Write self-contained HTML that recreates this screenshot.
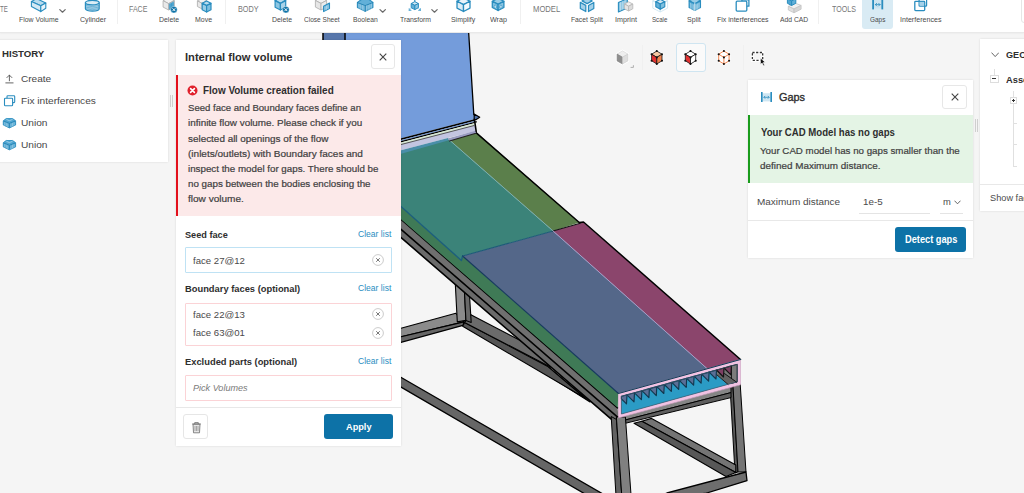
<!DOCTYPE html>
<html><head><meta charset="utf-8">
<style>
*{box-sizing:border-box;margin:0;padding:0}
html,body{width:1024px;height:493px;overflow:hidden;background:#f5f5f5;font-family:"Liberation Sans",sans-serif;color:#333}
.abs{position:absolute}
#scene{position:absolute;left:0;top:0;width:1024px;height:493px}
#toolbar{position:absolute;left:0;top:0;width:1024px;height:32px;background:#fff;box-shadow:0 1px 2px rgba(0,0,0,.08)}
.tl{position:absolute;top:14px;font-size:7.6px;color:#444;white-space:nowrap;transform:translateX(-50%);letter-spacing:-0.15px}
.tg{position:absolute;top:3px;font-size:9.5px;color:#666;white-space:nowrap;letter-spacing:-0.3px}
.sep{position:absolute;top:0;width:1px;height:24px;background:#f0f0f0}
.panel{position:absolute;background:#fff;box-shadow:0 0 2px rgba(0,0,0,.12)}
.t{position:absolute;white-space:nowrap;line-height:1;transform-origin:0 50%}
</style></head><body>
<svg id="scene" viewBox="0 0 1024 493">
<!-- SCENE -->
<polygon points="380.0,365.2 606.4,496.0 588.5,496.0 380.0,374.9" fill="#666" stroke="#000" stroke-width="1.3" stroke-linejoin="round"/>
<polygon points="730.0,386.0 733.0,386.0 738.0,472.0 735.0,473.0" fill="#585858" stroke="#000" stroke-width="1" stroke-linejoin="round"/>
<polygon points="733.0,386.0 740.2,384.0 746.0,472.0 738.0,472.0" fill="#747474" stroke="#000" stroke-width="1" stroke-linejoin="round"/>
<polygon points="651.6,418.4 735.8,465.1 735.8,472.5 641.8,421.3" fill="#747474" stroke="#000" stroke-width="1.1" stroke-linejoin="round"/>
<polygon points="641.8,421.3 735.8,472.5 726.0,476.5 634.0,423.3" fill="#585858" stroke="#000" stroke-width="1.1" stroke-linejoin="round"/>
<polygon points="746.0,472.0 747.0,480.7 705.0,493.5 660.0,496.0 667.0,493.0" fill="#6e6e6e" stroke="#000" stroke-width="1.3" stroke-linejoin="round"/>
<polygon points="620.0,416.6 731.0,386.4 731.0,392.6 625.3,420.0" fill="#858585" stroke="#000" stroke-width="1" stroke-linejoin="round"/>
<polygon points="625.3,420.0 731.0,392.6 731.0,397.6 625.3,423.3" fill="#5e5e5e" stroke="#000" stroke-width="1" stroke-linejoin="round"/>
<polygon points="380.0,334.0 455.8,313.3 463.9,321.9 380.0,341.7" fill="#8b8b8b" stroke="#000" stroke-width="1.1" stroke-linejoin="round"/>
<polygon points="380.0,341.7 463.9,321.9 462.9,325.4 380.0,348.1" fill="#666" stroke="#000" stroke-width="1.1" stroke-linejoin="round"/>
<polygon points="470.4,314.6 545.8,364.6 590.0,402.0 464.6,322.4" fill="#6b6b6b" stroke="#000" stroke-width="1.1" stroke-linejoin="round"/>
<polygon points="464.6,322.4 547.3,366.2 585.0,398.0 462.7,326.3" fill="#555" stroke="#000" stroke-width="1.1" stroke-linejoin="round"/>
<polygon points="470.4,314.6 530.0,345.5 560.0,372.0 464.6,322.4" fill="#6b6b6b" stroke="#000" stroke-width="1.1" stroke-linejoin="round"/>
<polygon points="455.2,282.0 464.4,290.0 465.9,320.4 457.3,321.9" fill="#8b8b8b" stroke="#000" stroke-width="1.1" stroke-linejoin="round"/>
<polygon points="464.4,290.0 469.5,295.0 471.2,322.4 465.9,320.4" fill="#686868" stroke="#000" stroke-width="1.1" stroke-linejoin="round"/>
<polygon points="380.0,201.0 617.6,407.8 618.5,417.8 380.0,211.1" fill="#6f6f6f"/>
<polygon points="380.0,211.1 618.5,417.8 618.5,425.4 380.0,219.4" fill="#6a6a6a"/>
<polyline points="380.0,201.0 617.6,407.8" fill="none" stroke="#000" stroke-width="1.6" stroke-linecap="round" stroke-linejoin="round"/>
<polyline points="380.0,211.1 618.5,417.8" fill="none" stroke="#000" stroke-width="1.6" stroke-linecap="round" stroke-linejoin="round"/>
<polyline points="380.0,219.4 618.5,425.4" fill="none" stroke="#000" stroke-width="1.6" stroke-linecap="round" stroke-linejoin="round"/>
<polygon points="611.2,416.5 616.4,419.4 621.8,496.0 616.0,496.0" fill="#626262" stroke="#000" stroke-width="1" stroke-linejoin="round"/>
<polygon points="616.4,417.0 625.4,417.0 631.1,496.0 621.8,496.0" fill="#808080" stroke="#000" stroke-width="1" stroke-linejoin="round"/>
<polygon points="380.0,187.8 461.4,260.5 462.6,256.0 618.2,393.2 617.8,407.8 380.0,201.0" fill="#3f7a56"/>
<polygon points="448.0,138.8 476.0,132.0 579.3,222.5 553.1,231.0" fill="#5b7f4b"/>
<polygon points="553.1,231.0 583.5,222.5 740.5,359.5 707.3,368.8" fill="#8b456c"/>
<polygon points="462.6,256.0 553.1,231.0 707.3,368.8 618.5,393.5" fill="#546789"/>
<polygon points="380.0,158.0 448.0,138.8 553.1,231.0 462.6,256.0 461.4,260.5 380.0,187.8" fill="#3b8379"/>
<polyline points="380.0,187.8 461.4,260.5 462.6,256.0" fill="none" stroke="#1c5f7c" stroke-width="1.4" stroke-linecap="round" stroke-linejoin="round"/>
<polyline points="462.6,256.0 618.2,393.2" fill="none" stroke="#163a5e" stroke-width="1.2" stroke-linecap="round" stroke-linejoin="round"/>
<polyline points="462.6,256.0 553.1,231.0" fill="none" stroke="#1d5a78" stroke-width="1.1" stroke-linecap="round" stroke-linejoin="round"/>
<polyline points="553.1,231.0 581.0,223.0" fill="none" stroke="#111" stroke-width="1.3" stroke-linecap="round" stroke-linejoin="round"/>
<polyline points="448.0,138.8 553.1,231.0" fill="none" stroke="#7fb0b0" stroke-width="0.9" stroke-linecap="round" stroke-linejoin="round"/>
<polyline points="553.1,231.0 707.3,368.8" fill="none" stroke="#a9a0cc" stroke-width="0.9" stroke-linecap="round" stroke-linejoin="round"/>
<polyline points="476.0,132.6 579.3,222.5" fill="none" stroke="#000" stroke-width="1.5" stroke-linecap="round" stroke-linejoin="round"/>
<polyline points="579.3,222.5 583.5,222.0 740.5,359.5" fill="none" stroke="#000" stroke-width="1.5" stroke-linecap="round" stroke-linejoin="round"/>
<polygon points="323.0,32.0 345.0,32.0 345.0,160.0 323.0,160.0" fill="#5877ab"/>
<polygon points="345.0,32.0 468.5,32.0 474.2,119.3 340.0,154.2" fill="#749cdb"/>
<polyline points="323.0,32.0 323.0,60.0" fill="none" stroke="#000" stroke-width="1.5" stroke-linecap="round" stroke-linejoin="round"/>
<polyline points="345.0,32.0 345.0,60.0" fill="none" stroke="#000" stroke-width="1.5" stroke-linecap="round" stroke-linejoin="round"/>
<polyline points="468.5,30.0 473.8,114.5" fill="none" stroke="#000" stroke-width="1.3" stroke-linecap="round" stroke-linejoin="round"/>
<polygon points="474.2,114.0 479.7,117.3 476.2,119.6 474.2,119.6" fill="#4d6fa5" stroke="#000" stroke-width="1.2" stroke-linejoin="round"/>
<polygon points="380.0,149.0 474.8,125.0 476.0,130.7 380.0,155.8" fill="#c3c5e1"/>
<polygon points="380.0,155.8 448.0,138.0 448.0,140.4 380.0,159.7" fill="#4a8ea9"/>
<polygon points="448.0,138.4 476.0,130.4 476.0,133.2 449.5,140.9" fill="#9a9cc2"/>
<polyline points="449.5,141.0 476.0,133.2" fill="none" stroke="#222" stroke-width="1.1" stroke-linecap="round" stroke-linejoin="round"/>
<polygon points="380.0,143.8 474.2,119.3 474.2,121.0 380.0,145.6" fill="#000"/>
<polygon points="380.0,145.6 474.2,121.0 474.2,122.0 380.0,146.6" fill="#6a92d2"/>
<polygon points="380.0,146.6 474.2,122.0 474.2,123.3 380.0,147.9" fill="#000"/>
<polygon points="380.0,147.9 474.2,123.3 474.2,125.0 380.0,149.6" fill="#d6e8d2"/>
<polygon points="380.0,149.6 474.2,125.0 474.2,126.0 380.0,150.6" fill="#555"/>
<polyline points="474.4,119.3 476.2,131.5" fill="none" stroke="#000" stroke-width="1.6" stroke-linecap="round" stroke-linejoin="round"/>
<polyline points="474.2,122.2 476.4,121.8" fill="none" stroke="#000" stroke-width="1.2" stroke-linecap="round" stroke-linejoin="round"/>
<polygon points="618.5,393.5 740.5,359.5 740.5,384.8 618.5,417.9" fill="#f1c3e3"/>
<polygon points="621.4,396.4 737.2,364.3 737.2,381.8 621.4,414.0" fill="#777"/>
<polygon points="621.4,396.4 712.5,371.1 728.0,384.4 621.4,414.0" fill="#2b9bc5"/>
<polygon points="731.5,365.9 737.2,364.3 737.2,381.8 731.5,383.4" fill="#7c7c7c" stroke="#111" stroke-width="0.9" stroke-linejoin="round"/>
<polygon points="716.5,374.6 724.6,373.6 736.8,382.3 728.0,384.4" fill="#626262"/>
<polyline points="724.6,373.6 736.8,382.3" fill="none" stroke="#111" stroke-width="1.0" stroke-linecap="round" stroke-linejoin="round"/>
<polyline points="712.8,371.4 728.0,384.4" fill="none" stroke="#1b1b1b" stroke-width="0.9" stroke-linecap="round" stroke-linejoin="round"/>
<polygon points="621.4,398.8 626.5,403.8 627.0,394.8 621.4,396.4" fill="#5a6f97" stroke="#12384f" stroke-width="1.15" stroke-linejoin="round"/>
<polygon points="627.0,394.8 634.0,401.8 634.5,392.8" fill="#5a6f97" stroke="#12384f" stroke-width="1.15" stroke-linejoin="round"/>
<polygon points="634.5,392.8 641.4,399.7 641.9,390.7" fill="#5a6f97" stroke="#12384f" stroke-width="1.15" stroke-linejoin="round"/>
<polygon points="641.9,390.7 648.9,397.6 649.4,388.6" fill="#5a6f97" stroke="#12384f" stroke-width="1.15" stroke-linejoin="round"/>
<polygon points="649.4,388.6 656.3,395.6 656.8,386.6" fill="#5a6f97" stroke="#12384f" stroke-width="1.15" stroke-linejoin="round"/>
<polygon points="656.8,386.6 663.8,393.5 664.3,384.5" fill="#5a6f97" stroke="#12384f" stroke-width="1.15" stroke-linejoin="round"/>
<polygon points="664.3,384.5 671.3,391.4 671.8,382.4" fill="#5a6f97" stroke="#12384f" stroke-width="1.15" stroke-linejoin="round"/>
<polygon points="671.8,382.4 678.7,389.4 679.2,380.4" fill="#5a6f97" stroke="#12384f" stroke-width="1.15" stroke-linejoin="round"/>
<polygon points="679.2,380.4 686.2,387.3 686.7,378.3" fill="#5a6f97" stroke="#12384f" stroke-width="1.15" stroke-linejoin="round"/>
<polygon points="686.7,378.3 693.6,385.2 694.1,376.2" fill="#5a6f97" stroke="#12384f" stroke-width="1.15" stroke-linejoin="round"/>
<polygon points="694.1,376.2 701.1,383.2 701.6,374.2" fill="#5a6f97" stroke="#12384f" stroke-width="1.15" stroke-linejoin="round"/>
<polygon points="701.6,374.2 708.6,381.1 709.1,372.1" fill="#5a6f97" stroke="#12384f" stroke-width="1.15" stroke-linejoin="round"/>
<polygon points="709.1,372.1 716.0,379.0 716.5,370.0" fill="#5a6f97" stroke="#12384f" stroke-width="1.15" stroke-linejoin="round"/>
<polygon points="716.5,370.0 723.5,377.0 724.0,368.0" fill="#7d3f63" stroke="#141414" stroke-width="1.15" stroke-linejoin="round"/>
<polygon points="724.0,368.0 730.9,374.9 731.4,365.9" fill="#7d3f63" stroke="#141414" stroke-width="1.15" stroke-linejoin="round"/>
<polyline points="621.4,396.4 737.2,364.3 737.2,381.8 621.4,414.0 621.4,396.4" fill="none" stroke="#3a5a70" stroke-width="0.7" stroke-linecap="round" stroke-linejoin="round"/>
<polyline points="618.5,393.5 740.5,359.5 740.5,384.8 618.5,417.9 618.5,393.5" fill="none" stroke="#caa0c0" stroke-width="0.6" stroke-linecap="round" stroke-linejoin="round"/>
<polyline points="618.5,393.5 740.5,359.5" fill="none" stroke="#0e3b55" stroke-width="1.0" stroke-linecap="round" stroke-linejoin="round"/>
<!-- /SCENE -->
</svg>
<!-- UI -->
<div id="toolbar"></div>
<div class="abs" style="left:0;top:32px;width:1024px;height:1px;background:#e9e9e9"></div>
<!-- toolbar separators -->
<div class="sep" style="left:116.5px"></div><div class="sep" style="left:225.3px"></div><div class="sep" style="left:520px"></div><div class="sep" style="left:818.2px"></div>
<!-- active gaps tool bg -->
<div class="abs" style="left:862.3px;top:-3px;width:30.6px;height:31.8px;background:#d9ebf4;border-radius:3px"></div>
<!-- right toolbar box edge -->
<div class="abs" style="left:1020.5px;top:-4px;width:20px;height:27px;border:1px solid #e6e6e6;border-radius:3px"></div>

<!-- HISTORY panel -->
<div class="panel" style="left:-2px;top:39.5px;width:170px;height:122px"></div>
<div class="abs" style="left:170.3px;top:94.5px;width:1px;height:12px;background:#cfcfcf"></div>
<div class="abs" style="left:172.2px;top:94.5px;width:1px;height:12px;background:#cfcfcf"></div>

<!-- FLOW panel -->
<div class="panel" style="left:175.5px;top:39.5px;width:225.5px;height:406px"></div>
<div class="abs" style="left:370.5px;top:44.4px;width:24.2px;height:24.8px;border:1px solid #e7e7e7;border-radius:3px;background:#fff"></div>
<svg class="abs" style="left:378.8px;top:53px" width="8" height="8" viewBox="0 0 8 8"><path d="M0.7 0.7L7.3 7.3M7.3 0.7L0.7 7.3" stroke="#444" stroke-width="1.1" fill="none"/></svg>
<div class="abs" style="left:175.5px;top:74.6px;width:225.5px;height:141.2px;background:#fce9e9"></div>
<div class="abs" style="left:175.5px;top:74.6px;width:2.5px;height:141.2px;background:#e3101c"></div>
<svg class="abs" style="left:187.2px;top:85.4px" width="11" height="11" viewBox="0 0 11 11"><circle cx="5.5" cy="5.5" r="5" fill="#e0202b"/><path d="M3.6 3.6L7.4 7.4M7.4 3.6L3.6 7.4" stroke="#fff" stroke-width="1.6" stroke-linecap="round"/></svg>
<!-- seed input -->
<div class="abs" style="left:185px;top:247.3px;width:206.6px;height:26.2px;border:1px solid #bfe2f4;border-radius:1px;background:#fff"></div>
<svg class="abs" style="left:372.4px;top:254.2px" width="12" height="12" viewBox="0 0 12 12"><circle cx="6" cy="6" r="5.4" fill="#fff" stroke="#c6c6c6" stroke-width="0.9"/><path d="M4.2 4.2L7.8 7.8M7.8 4.2L4.2 7.8" stroke="#555" stroke-width="0.8"/></svg>
<!-- boundary box -->
<div class="abs" style="left:185px;top:302.5px;width:206.6px;height:43.5px;border:1px solid #fbd3d6;border-radius:1px;background:#fff"></div>
<svg class="abs" style="left:372.4px;top:308.4px" width="12" height="12" viewBox="0 0 12 12"><circle cx="6" cy="6" r="5.4" fill="#fff" stroke="#c6c6c6" stroke-width="0.9"/><path d="M4.2 4.2L7.8 7.8M7.8 4.2L4.2 7.8" stroke="#555" stroke-width="0.8"/></svg>
<svg class="abs" style="left:372.4px;top:327.2px" width="12" height="12" viewBox="0 0 12 12"><circle cx="6" cy="6" r="5.4" fill="#fff" stroke="#c6c6c6" stroke-width="0.9"/><path d="M4.2 4.2L7.8 7.8M7.8 4.2L4.2 7.8" stroke="#555" stroke-width="0.8"/></svg>
<!-- excluded box -->
<div class="abs" style="left:185px;top:375.4px;width:206.6px;height:25.2px;border:1px solid #fbd3d6;border-radius:1px;background:#fff"></div>
<div class="abs" style="left:175.5px;top:407px;width:225.5px;height:1px;background:#e8e8e8"></div>
<!-- trash btn -->
<div class="abs" style="left:183.3px;top:414.1px;width:24.4px;height:25px;border:1px solid #e6e6e6;border-radius:3px;background:#fff"></div>
<svg class="abs" style="left:190.5px;top:420.5px" width="11" height="13" viewBox="0 0 11 13"><path d="M1 3h9M3.7 3V1.6h3.6V3M2 3.2l0.5 8.6h6l0.5-8.6z" fill="#e6e6e6" stroke="#727272" stroke-width="0.85" stroke-linejoin="round"/><path d="M4 5v5M5.5 5v5M7 5v5" stroke="#8a8a8a" stroke-width="0.7"/></svg>
<!-- apply btn -->
<div class="abs" style="left:324.4px;top:414.1px;width:68.6px;height:24.9px;border-radius:3px;background:#0d72a7"></div>

<!-- GAPS panel -->
<div class="panel" style="left:747.8px;top:80px;width:225.3px;height:178.2px"></div>
<div class="abs" style="left:942.4px;top:84.5px;width:24.2px;height:24.8px;border:1px solid #e7e7e7;border-radius:3px;background:#fff"></div>
<svg class="abs" style="left:950.7px;top:92.7px" width="8" height="8" viewBox="0 0 8 8"><path d="M0.7 0.7L7.3 7.3M7.3 0.7L0.7 7.3" stroke="#444" stroke-width="1.1" fill="none"/></svg>
<svg class="abs" style="left:761px;top:91.6px" width="11" height="10.6" viewBox="0 0 11 10.6"><rect x="0.8" y="1.2" width="9.4" height="8.2" fill="#cfe6f2"/><rect x="0" y="0" width="1.6" height="10.6" fill="#2a8dbf"/><rect x="9.4" y="0" width="1.6" height="10.6" fill="#2a8dbf"/><path d="M2.8 5.3H8.2M4.2 3.9L2.8 5.3L4.2 6.7M6.8 3.9L8.2 5.3L6.8 6.7" stroke="#2a8dbf" stroke-width="0.8" fill="none"/></svg>
<div class="abs" style="left:747.8px;top:115px;width:225.3px;height:67.7px;background:#e4f4e5"></div>
<div class="abs" style="left:747.8px;top:115px;width:2.5px;height:67.7px;background:#1a9c1c"></div>
<div class="abs" style="left:859.1px;top:213.3px;width:70.7px;height:1px;background:#e4e4e4"></div>
<div class="abs" style="left:939.8px;top:213.3px;width:23.2px;height:1px;background:#e4e4e4"></div>
<svg class="abs" style="left:953.6px;top:199.8px" width="7" height="5" viewBox="0 0 7 5"><path d="M0.5 0.7L3.5 3.8L6.5 0.7" stroke="#555" stroke-width="0.9" fill="none"/></svg>
<div class="abs" style="left:747.8px;top:219.6px;width:225.3px;height:1px;background:#e8e8e8"></div>
<div class="abs" style="left:894.6px;top:227.4px;width:71.8px;height:24.6px;border-radius:3px;background:#0d72a7"></div>
<div class="abs" style="left:975.3px;top:119.4px;width:1px;height:12.6px;background:#cfcfcf"></div>
<div class="abs" style="left:977.2px;top:119.4px;width:1px;height:12.6px;background:#cfcfcf"></div>

<!-- GEOMETRY panel -->
<div class="panel" style="left:979.5px;top:39.3px;width:50px;height:172.2px"></div>
<svg class="abs" style="left:990.5px;top:51.8px" width="8.4" height="5.4" viewBox="0 0 8.4 5.4"><path d="M0.5 0.6L4.2 4.6L7.9 0.6" stroke="#555" stroke-width="0.9" fill="none"/></svg>
<div class="abs" style="left:994.2px;top:69px;width:1px;height:6px;background:#e0e0e0"></div>
<div class="abs" style="left:990px;top:74.5px;width:8.6px;height:8.6px;border:1px solid #ddd;background:#fff"></div>
<div class="abs" style="left:992.3px;top:78.2px;width:4px;height:1.3px;background:#333"></div>
<div class="abs" style="left:1013.1px;top:91px;width:1px;height:75.4px;background:#e0e0e0"></div>
<div class="abs" style="left:1009.5px;top:96.9px;width:7.6px;height:7.6px;border:1px solid #ddd;background:#fff"></div>
<div class="abs" style="left:1011.5px;top:100.2px;width:3.6px;height:1.1px;background:#333"></div>
<div class="abs" style="left:1012.8px;top:98.9px;width:1.1px;height:3.6px;background:#333"></div>
<div class="abs" style="left:1013.1px;top:123px;width:4px;height:1px;background:#e0e0e0"></div>
<div class="abs" style="left:1013.1px;top:144.4px;width:4px;height:1px;background:#e0e0e0"></div>
<div class="abs" style="left:1013.1px;top:165.6px;width:4px;height:1px;background:#e0e0e0"></div>
<div class="abs" style="left:979.5px;top:183.8px;width:50px;height:1px;background:#e8e8e8"></div>

<!-- viewport tool icons -->
<div class="abs" style="left:675.6px;top:42.5px;width:30px;height:29.5px;border:1px solid #cfe5f1;border-radius:3px;background:#fafafa"></div>
<div class="abs" style="left:641.5px;top:45px;width:1px;height:25px;background:#f0f0f0"></div>
<div class="abs" style="left:743.2px;top:45px;width:1px;height:25px;background:#f0f0f0"></div>
<!-- ICONS -->
<svg class="abs" style="left:0;top:0" width="1024" height="32" viewBox="0 0 1024 32"><polygon points="31.40,1.60 36.60,-1.40 45.80,3.00 40.80,5.80" fill="#b9dcee" stroke="#2a8dbf" stroke-width="1.1" stroke-linejoin="round"/>
<polygon points="31.40,1.60 40.80,5.80 40.80,11.60 31.40,6.60" fill="#d4e9f4" stroke="#2a8dbf" stroke-width="1.1" stroke-linejoin="round"/>
<polygon points="40.80,5.80 45.80,3.00 45.80,8.20 40.80,11.60" fill="#eaf4fa" stroke="#2a8dbf" stroke-width="1.1" stroke-linejoin="round"/>
<path d="M59.8 9.6L62.5 12.2L65.2 9.6" fill="none" stroke="#6a6a6a" stroke-width="1.2" stroke-linecap="round" stroke-linejoin="round" />
<path d="M85.4 2.6V8.8A6.9 2.4 0 0 0 99.2 8.8V2.6" fill="#a9d3e9" stroke="#2a8dbf" stroke-width="1.2"/>
<ellipse cx="92.3" cy="2.6" rx="6.9" ry="2.3" fill="#dbedf6" stroke="#2a8dbf" stroke-width="1.2"/>
<path d="M86 5.6Q92.3 7.8 98.6 5.6" fill="none" stroke="#2a8dbf" stroke-width="0.45" stroke-linecap="round" stroke-linejoin="round" />
<path d="M86 7.2Q92.3 9.4 98.6 7.2" fill="none" stroke="#2a8dbf" stroke-width="0.45" stroke-linecap="round" stroke-linejoin="round" />
<path d="M86 8.8Q92.3 11.0 98.6 8.8" fill="none" stroke="#2a8dbf" stroke-width="0.45" stroke-linecap="round" stroke-linejoin="round" />
<polygon points="168.70,-2.22 174.30,0.69 168.70,3.60 163.10,0.69" fill="#f2f2f2" stroke="#b2b2b2" stroke-width="0.9" stroke-linejoin="round"/>
<polygon points="163.10,0.69 168.70,3.60 168.70,10.00 163.10,7.09" fill="#e9e9e9" stroke="#b2b2b2" stroke-width="0.9" stroke-linejoin="round"/>
<polygon points="168.70,3.60 174.30,0.69 174.30,7.09 168.70,10.00" fill="#5fb0d8" stroke="#b2b2b2" stroke-width="0.9" stroke-linejoin="round"/>
<path d="M170 4.4V9.6M171.5 3.6V8.9M173 2.9V8.2" fill="none" stroke="#2a8dbf" stroke-width="0.6" stroke-linecap="round" stroke-linejoin="round" />
<circle cx="173.9" cy="9.7" r="3.3" fill="#0d72a7" stroke="#fff" stroke-width="0.4"/>
<path d="M172.75 8.55L175.05 10.85M175.05 8.55L172.75 10.85" fill="none" stroke="#fff" stroke-width="0.95" stroke-linecap="round" stroke-linejoin="round" />
<polygon points="202.20,-1.59 207.00,0.90 202.20,3.40 197.40,0.90" fill="#f2f2f2" stroke="#b2b2b2" stroke-width="0.9" stroke-linejoin="round"/>
<polygon points="197.40,0.90 202.20,3.40 202.20,9.00 197.40,6.50" fill="#e8e8e8" stroke="#b2b2b2" stroke-width="0.9" stroke-linejoin="round"/>
<polygon points="202.20,3.40 207.00,0.90 207.00,6.50 202.20,9.00" fill="#ececec" stroke="#b2b2b2" stroke-width="0.9" stroke-linejoin="round"/>
<polygon points="206.60,1.02 211.00,3.31 206.60,5.60 202.20,3.31" fill="#b9dcee" stroke="#2a8dbf" stroke-width="1.2" stroke-linejoin="round"/>
<polygon points="202.20,3.31 206.60,5.60 206.60,12.00 202.20,9.71" fill="#9acde6" stroke="#2a8dbf" stroke-width="1.2" stroke-linejoin="round"/>
<polygon points="206.60,5.60 211.00,3.31 211.00,9.71 206.60,12.00" fill="#7fc0e0" stroke="#2a8dbf" stroke-width="1.2" stroke-linejoin="round"/>
<polygon points="280.40,-2.11 285.70,0.64 280.40,3.40 275.10,0.64" fill="#b9dcee" stroke="#2a8dbf" stroke-width="1.2" stroke-linejoin="round"/>
<polygon points="275.10,0.64 280.40,3.40 280.40,10.00 275.10,7.24" fill="#8cc6e3" stroke="#2a8dbf" stroke-width="1.2" stroke-linejoin="round"/>
<polygon points="280.40,3.40 285.70,0.64 285.70,7.24 280.40,10.00" fill="#a9d3e9" stroke="#2a8dbf" stroke-width="1.2" stroke-linejoin="round"/>
<circle cx="285.9" cy="9.7" r="3.3" fill="#0d72a7" stroke="#fff" stroke-width="0.4"/>
<path d="M284.75 8.55L287.05 10.85M287.05 8.55L284.75 10.85" fill="none" stroke="#fff" stroke-width="0.95" stroke-linecap="round" stroke-linejoin="round" />
<polygon points="321.00,-2.42 326.60,0.49 321.00,3.40 315.40,0.49" fill="#f2f2f2" stroke="#b2b2b2" stroke-width="0.9" stroke-linejoin="round"/>
<polygon points="315.40,0.49 321.00,3.40 321.00,10.00 315.40,7.09" fill="#e6e6e6" stroke="#b2b2b2" stroke-width="0.9" stroke-linejoin="round"/>
<polygon points="321.00,3.40 326.60,0.49 326.60,7.09 321.00,10.00" fill="#ececec" stroke="#b2b2b2" stroke-width="0.9" stroke-linejoin="round"/>
<polygon points="323.60,6.30 329.50,3.10 329.50,8.40 323.60,11.60" fill="#6db5da" stroke="#2a8dbf" stroke-width="1.1" stroke-linejoin="round"/>
<path d="M325 6.8V10.2M326.5 6V9.4M328 5.2V8.6" fill="none" stroke="#e6f3fa" stroke-width="0.5" stroke-linecap="round" stroke-linejoin="round" />
<polygon points="357.40,2.40 361.50,-0.50 369.00,-0.50 372.90,2.40 372.90,7.60 365.20,11.30 357.40,7.60" fill="#62b0d8" stroke="#2a8dbf" stroke-width="1.1" stroke-linejoin="round"/>
<path d="M357.4 2.6L365.2 5.6L372.9 2.6M365.2 5.6V11.2" fill="none" stroke="#1f7fb0" stroke-width="0.9" stroke-linecap="round" stroke-linejoin="round" />
<path d="M359 4V8.6M360.7 4.7V9.4M362.4 5.3V10.1M363.9 5.8V10.6M366.6 5.8V10.6M368.2 5.3V10.1M369.8 4.7V9.4M371.4 4V8.6" fill="none" stroke="#cfe6f2" stroke-width="0.45" stroke-linecap="round" stroke-linejoin="round" />
<path d="M380.0 9.6L382.7 12.2L385.4 9.6" fill="none" stroke="#6a6a6a" stroke-width="1.2" stroke-linecap="round" stroke-linejoin="round" />
<polygon points="414.80,1.66 418.40,3.53 414.80,5.40 411.20,3.53" fill="#cfe6f2" stroke="#2a8dbf" stroke-width="1.0" stroke-linejoin="round"/>
<polygon points="411.20,3.53 414.80,5.40 414.80,9.60 411.20,7.73" fill="#62b0d8" stroke="#2a8dbf" stroke-width="1.0" stroke-linejoin="round"/>
<polygon points="414.80,5.40 418.40,3.53 418.40,7.73 414.80,9.60" fill="#8cc6e3" stroke="#2a8dbf" stroke-width="1.0" stroke-linejoin="round"/>
<path d="M414.8 -1V1.2" fill="none" stroke="#2a8dbf" stroke-width="1.2" stroke-linecap="round" stroke-linejoin="round" />
<path d="M410.6 8.8L409.2 10.4M409.2 8.6V10.4H411" fill="none" stroke="#3c9bcb" stroke-width="0.8" stroke-linecap="round" stroke-linejoin="round" />
<path d="M419 8.8L420.4 10.4M420.4 8.6V10.4H418.6" fill="none" stroke="#3c9bcb" stroke-width="0.8" stroke-linecap="round" stroke-linejoin="round" />
<path d="M431.8 9.6L434.5 12.2L437.2 9.6" fill="none" stroke="#6a6a6a" stroke-width="1.2" stroke-linecap="round" stroke-linejoin="round" />
<polygon points="463.50,-2.16 470.00,1.22 463.50,4.60 457.00,1.22" fill="#eaf4fa" stroke="#2a8dbf" stroke-width="1.3" stroke-linejoin="round"/>
<polygon points="457.00,1.22 463.50,4.60 463.50,11.50 457.00,8.12" fill="#dcedf6" stroke="#2a8dbf" stroke-width="1.3" stroke-linejoin="round"/>
<polygon points="463.50,4.60 470.00,1.22 470.00,8.12 463.50,11.50" fill="#f3f9fc" stroke="#2a8dbf" stroke-width="1.3" stroke-linejoin="round"/>
<polygon points="498.10,-1.73 503.90,1.28 498.10,4.30 492.30,1.28" fill="#9acde6" stroke="#2a8dbf" stroke-width="1.3" stroke-linejoin="round"/>
<polygon points="492.30,1.28 498.10,4.30 498.10,10.50 492.30,7.48" fill="#7fc0e0" stroke="#2a8dbf" stroke-width="1.3" stroke-linejoin="round"/>
<polygon points="498.10,4.30 503.90,1.28 503.90,7.48 498.10,10.50" fill="#8cc6e3" stroke="#2a8dbf" stroke-width="1.3" stroke-linejoin="round"/>
<ellipse cx="495.3" cy="6.8" rx="1.3" ry="1.7" fill="#b9dcee" stroke="#2a8dbf" stroke-width="0.6"/>
<ellipse cx="500.9" cy="6.8" rx="1.3" ry="1.7" fill="#b9dcee" stroke="#2a8dbf" stroke-width="0.6"/>
<polygon points="580.30,2.40 585.80,5.40 585.80,11.60 580.30,8.40" fill="#a5d1e9" stroke="#2a8dbf" stroke-width="1.2" stroke-linejoin="round"/>
<polygon points="588.50,5.40 593.80,2.40 593.80,8.40 588.50,11.60" fill="#a5d1e9" stroke="#2a8dbf" stroke-width="1.2" stroke-linejoin="round"/>
<polygon points="582.00,0.90 587.10,-2.00 592.20,0.90 587.10,3.60" fill="#a5d1e9" stroke="#2a8dbf" stroke-width="1.2" stroke-linejoin="round"/>
<polygon points="618.40,2.60 627.30,-1.40 627.30,8.00 618.40,12.00" fill="#8cc6e3" stroke="#2a8dbf" stroke-width="1.1" stroke-linejoin="round"/>
<path d="M620.6 2.6V10.2M622.8 1.6V9.2M625 0.6V8.2" fill="none" stroke="#d7ebf5" stroke-width="0.6" stroke-linecap="round" stroke-linejoin="round" />
<polygon points="628.60,1.83 632.80,4.02 628.60,6.20 624.40,4.02" fill="#efefef" stroke="#b5b5b5" stroke-width="0.8" stroke-linejoin="round"/>
<polygon points="624.40,4.02 628.60,6.20 628.60,11.00 624.40,8.82" fill="#e4e4e4" stroke="#b5b5b5" stroke-width="0.8" stroke-linejoin="round"/>
<polygon points="628.60,6.20 632.80,4.02 632.80,8.82 628.60,11.00" fill="#dcdcdc" stroke="#b5b5b5" stroke-width="0.8" stroke-linejoin="round"/>
<polygon points="660.20,-3.10 667.60,0.75 660.20,4.60 652.80,0.75" fill="none" stroke="#cfe6f2" stroke-width="0.9" stroke-linejoin="round"/>
<polygon points="652.80,0.75 660.20,4.60 660.20,12.00 652.80,8.15" fill="none" stroke="#cfe6f2" stroke-width="0.9" stroke-linejoin="round"/>
<polygon points="660.20,4.60 667.60,0.75 667.60,8.15 660.20,12.00" fill="none" stroke="#cfe6f2" stroke-width="0.9" stroke-linejoin="round"/>
<polygon points="660.30,-0.68 664.80,1.66 660.30,4.00 655.80,1.66" fill="#cfe6f2" stroke="#2a8dbf" stroke-width="1.1" stroke-linejoin="round"/>
<polygon points="655.80,1.66 660.30,4.00 660.30,9.20 655.80,6.86" fill="#62b0d8" stroke="#2a8dbf" stroke-width="1.1" stroke-linejoin="round"/>
<polygon points="660.30,4.00 664.80,1.66 664.80,6.86 660.30,9.20" fill="#7fc0e0" stroke="#2a8dbf" stroke-width="1.1" stroke-linejoin="round"/>
<polygon points="694.80,-2.13 700.50,0.84 694.80,3.80 689.10,0.84" fill="#9acde6" stroke="#2a8dbf" stroke-width="1.1" stroke-linejoin="round"/>
<polygon points="689.10,0.84 694.80,3.80 694.80,10.40 689.10,7.44" fill="#4fa6d2" stroke="#2a8dbf" stroke-width="1.1" stroke-linejoin="round"/>
<polygon points="694.80,3.80 700.50,0.84 700.50,7.44 694.80,10.40" fill="#62b0d8" stroke="#2a8dbf" stroke-width="1.1" stroke-linejoin="round"/>
<path d="M690.6 3.4V8.6M692 4.1V9.4M693.4 4.8V10M696.2 4.8V10M697.6 4.1V9.4M699 3.4V8.6" fill="none" stroke="#d7ebf5" stroke-width="0.5" stroke-linecap="round" stroke-linejoin="round" />
<path d="M694.8 3.6L694.8 10.4" fill="none" stroke="#eef7fb" stroke-width="1.0" stroke-linecap="round" stroke-linejoin="round" />
<path d="M741.9 -1V1.2M741.9 -0.2H748.9V6.2H746.8" fill="none" stroke="#2a8dbf" stroke-width="1.3" stroke-linecap="round" stroke-linejoin="round" />
<rect x="736.2" y="1.2" width="10.6" height="9.9" rx="1" fill="#fff" stroke="#2a8dbf" stroke-width="1.3"/>
<polygon points="788.30,6.40 795.20,3.20 801.10,5.40 794.00,9.00" fill="#f0f0f0" stroke="#c4c4c4" stroke-width="0.8" stroke-linejoin="round"/>
<polygon points="788.30,6.40 794.00,9.00 794.00,12.80 788.30,10.00" fill="#e0e0e0" stroke="#c4c4c4" stroke-width="0.8" stroke-linejoin="round"/>
<polygon points="794.00,9.00 801.10,5.40 801.10,9.20 794.00,12.80" fill="#d6d6d6" stroke="#c4c4c4" stroke-width="0.8" stroke-linejoin="round"/>
<polygon points="791.60,-3.47 795.80,-1.28 791.60,0.90 787.40,-1.28" fill="#9acde6" stroke="#2a8dbf" stroke-width="1.0" stroke-linejoin="round"/>
<polygon points="787.40,-1.28 791.60,0.90 791.60,5.50 787.40,3.32" fill="#4fa6d2" stroke="#2a8dbf" stroke-width="1.0" stroke-linejoin="round"/>
<polygon points="791.60,0.90 795.80,-1.28 795.80,3.32 791.60,5.50" fill="#62b0d8" stroke="#2a8dbf" stroke-width="1.0" stroke-linejoin="round"/>
<rect x="873" y="-1" width="9.5" height="9.6" fill="#cde4f0"/>
<rect x="872.2" y="-1" width="1.8" height="10.4" fill="#2a8dbf"/><rect x="881.4" y="-1" width="1.8" height="10.4" fill="#2a8dbf"/>
<path d="M875.4 4.6H880M876.7 3.3L875.4 4.6L876.7 5.9M878.7 3.3L880 4.6L878.7 5.9" fill="none" stroke="#2a8dbf" stroke-width="0.8" stroke-linecap="round" stroke-linejoin="round" />
<rect x="919.1" y="-2" width="7.5" height="8.2" rx="0.8" fill="#fff" stroke="#2a8dbf" stroke-width="1.2"/>
<rect x="914.8" y="1.3" width="9.9" height="9.3" rx="0.8" fill="none" stroke="#2a8dbf" stroke-width="1.3"/>
<rect x="919.7" y="1.9" width="4.4" height="3.7" fill="#a5d1e9"/></svg>
<svg class="abs" style="left:0;top:0" width="40" height="170" viewBox="0 0 40 170"><path d="M9.4 75.2V80.8M6.9 77.6L9.4 75.1L11.9 77.6M5.8 82.9H13.1" fill="none" stroke="#555" stroke-width="0.9" stroke-linecap="round" stroke-linejoin="round"/>
<rect x="7" y="95.8" width="7.7" height="6.8" rx="0.8" fill="#fff" stroke="#2a8dbf" stroke-width="1.1"/>
<rect x="4.5" y="98.3" width="8.1" height="7.4" rx="0.8" fill="#fff" stroke="#2a8dbf" stroke-width="1.1"/>
<path d="M3.3 120.8L6.2 118.6L12.6 118.6L15.6 120.8V125.0L9.4 127.9L3.3 125.0Z" fill="#4fa6d2" stroke="#2a8dbf" stroke-width="0.9" stroke-linejoin="round"/>
<path d="M3.5 121.0L9.4 123.4L15.4 121.0M9.4 123.4V127.7" fill="none" stroke="#1f7fb0" stroke-width="0.8"/>
<path d="M4.8 122.2V125.8M6.3 122.8V126.5M7.8 123.4V127.1M11 123.4V127.1M12.5 122.8V126.5M14 122.2V125.8" fill="none" stroke="#cfe6f2" stroke-width="0.45"/>
<path d="M6.4 119.4L9.4 120.7L12.5 119.4" fill="none" stroke="#cfe6f2" stroke-width="0.6"/>
<path d="M3.3 142.70000000000002L6.2 140.5L12.6 140.5L15.6 142.70000000000002V146.9L9.4 149.8L3.3 146.9Z" fill="#4fa6d2" stroke="#2a8dbf" stroke-width="0.9" stroke-linejoin="round"/>
<path d="M3.5 142.9L9.4 145.3L15.4 142.9M9.4 145.3V149.6" fill="none" stroke="#1f7fb0" stroke-width="0.8"/>
<path d="M4.8 144.1V147.70000000000002M6.3 144.70000000000002V148.4M7.8 145.3V149.0M11 145.3V149.0M12.5 144.70000000000002V148.4M14 144.1V147.70000000000002" fill="none" stroke="#cfe6f2" stroke-width="0.45"/>
<path d="M6.4 141.3L9.4 142.6L12.5 141.3" fill="none" stroke="#cfe6f2" stroke-width="0.6"/></svg>
<svg class="abs" style="left:0;top:0" width="1024" height="80" viewBox="0 0 1024 80"><polygon points="622.50,50.80 627.90,54.10 627.90,60.90 622.50,64.00 617.10,60.90 617.10,54.10" fill="#fff" stroke="#fff" stroke-width="2.4" stroke-linejoin="round"/>
<polygon points="622.50,50.80 627.90,54.10 622.50,57.20 617.10,54.10" fill="#efefef" stroke="#cfcfcf" stroke-width="0.5" stroke-linejoin="round"/>
<polygon points="617.10,54.10 622.50,57.20 622.50,64.00 617.10,60.90" fill="#8e8e8e" stroke="#808080" stroke-width="0.6" stroke-linejoin="round"/>
<polygon points="622.50,57.20 627.90,54.10 627.90,60.90 622.50,64.00" fill="#dedede" stroke="#c4c4c4" stroke-width="0.5" stroke-linejoin="round"/>
<path d="M633.4 65.2V67.4H630.6" fill="none" stroke="#a6a6a6" stroke-width="0.9"/>
<polygon points="656.80,51.00 662.00,54.20 662.00,60.80 656.80,64.00 651.60,60.80 651.60,54.20" fill="#fff" stroke="#fff" stroke-width="2.6" stroke-linejoin="round"/>
<polygon points="656.80,51.00 662.00,54.20 656.80,57.40 651.60,54.20" fill="#f6c8a2" stroke="#111" stroke-width="0.8" stroke-linejoin="round"/>
<polygon points="651.60,54.20 656.80,57.40 656.80,64.00 651.60,60.80" fill="#e23232" stroke="#111" stroke-width="0.8" stroke-linejoin="round"/>
<polygon points="656.80,57.40 662.00,54.20 662.00,60.80 656.80,64.00" fill="#f0824e" stroke="#111" stroke-width="0.8" stroke-linejoin="round"/>
<circle cx="656.80" cy="51.00" r="1.05" fill="#111"/>
<circle cx="651.60" cy="54.20" r="1.05" fill="#111"/>
<circle cx="662.00" cy="54.20" r="1.05" fill="#111"/>
<circle cx="656.80" cy="57.40" r="1.05" fill="#111"/>
<circle cx="651.60" cy="60.80" r="1.05" fill="#111"/>
<circle cx="662.00" cy="60.80" r="1.05" fill="#111"/>
<circle cx="656.80" cy="64.00" r="1.05" fill="#111"/>
<polygon points="690.50,51.00 695.70,54.20 695.70,60.80 690.50,64.00 685.30,60.80 685.30,54.20" fill="#fff" stroke="#fff" stroke-width="2.6" stroke-linejoin="round"/>
<polygon points="690.50,51.00 695.70,54.20 690.50,57.40 685.30,54.20" fill="#ffffff" stroke="#111" stroke-width="0.8" stroke-linejoin="round"/>
<polygon points="685.30,54.20 690.50,57.40 690.50,64.00 685.30,60.80" fill="#e23232" stroke="#111" stroke-width="0.8" stroke-linejoin="round"/>
<polygon points="690.50,57.40 695.70,54.20 695.70,60.80 690.50,64.00" fill="#ffffff" stroke="#111" stroke-width="0.8" stroke-linejoin="round"/>
<circle cx="690.50" cy="51.00" r="1.05" fill="#111"/>
<circle cx="685.30" cy="54.20" r="1.05" fill="#111"/>
<circle cx="695.70" cy="54.20" r="1.05" fill="#111"/>
<circle cx="690.50" cy="57.40" r="1.05" fill="#111"/>
<circle cx="685.30" cy="60.80" r="1.05" fill="#111"/>
<circle cx="695.70" cy="60.80" r="1.05" fill="#111"/>
<circle cx="690.50" cy="64.00" r="1.05" fill="#111"/>
<polygon points="723.90,51.00 729.10,54.20 729.10,60.80 723.90,64.00 718.70,60.80 718.70,54.20" fill="#fff" stroke="#fff" stroke-width="2.6" stroke-linejoin="round"/>
<path d="M723.9 51.0L729.1 54.2L729.1 60.8L723.9 64.0L718.6999999999999 60.8L718.6999999999999 54.2ZM718.6999999999999 54.2L723.9 57.4L729.1 54.2M723.9 57.4L723.9 64.0" fill="none" stroke="#f0783c" stroke-width="0.9"/>
<circle cx="723.90" cy="51.00" r="1.05" fill="#111"/>
<circle cx="718.70" cy="54.20" r="1.05" fill="#111"/>
<circle cx="729.10" cy="54.20" r="1.05" fill="#111"/>
<circle cx="723.90" cy="57.40" r="1.05" fill="#111"/>
<circle cx="718.70" cy="60.80" r="1.05" fill="#111"/>
<circle cx="729.10" cy="60.80" r="1.05" fill="#111"/>
<circle cx="723.90" cy="64.00" r="1.05" fill="#111"/>
<rect x="752.4" y="52.5" width="10.3" height="7.8" fill="none" stroke="#fff" stroke-width="3"/>
<rect x="752.4" y="52.5" width="10.3" height="7.8" fill="none" stroke="#333" stroke-width="1.3" stroke-dasharray="2.2 1.5"/>
<path d="M760.4 58.0L760.4 64.6L762.1 63.1L763.4 65.8L764.6 65.2L763.3 62.6L765.5 62.4Z" fill="#111" stroke="#fff" stroke-width="0.7"/></svg>
<!-- /ICONS -->
<!-- TEXTS -->
<span class="t" id="t0" style="left:185.40px;top:50.93px;font-size:11.6px;font-weight:bold;font-style:normal;color:#2e2e2e;transform:scaleX(0.9590);">Internal flow volume</span>
<span class="t" id="t1" style="left:202.70px;top:85.50px;font-size:10.4px;font-weight:bold;font-style:normal;color:#2e2e2e;transform:scaleX(0.9565);">Flow Volume creation failed</span>
<span class="t" id="t2" style="left:188.00px;top:103.17px;font-size:9.6px;font-weight:normal;font-style:normal;color:#404040;transform:scaleX(0.9979);-webkit-text-stroke:0.2px #404040;">Seed face and Boundary faces define an</span>
<span class="t" id="t3" style="left:188.00px;top:118.34px;font-size:9.6px;font-weight:normal;font-style:normal;color:#404040;transform:scaleX(1.0311);-webkit-text-stroke:0.2px #404040;">infinite flow volume. Please check if you</span>
<span class="t" id="t4" style="left:188.00px;top:133.51px;font-size:9.6px;font-weight:normal;font-style:normal;color:#404040;transform:scaleX(1.0324);-webkit-text-stroke:0.2px #404040;">selected all openings of the flow</span>
<span class="t" id="t5" style="left:188.00px;top:148.68px;font-size:9.6px;font-weight:normal;font-style:normal;color:#404040;transform:scaleX(1.0445);-webkit-text-stroke:0.2px #404040;">(inlets/outlets) with Boundary faces and</span>
<span class="t" id="t6" style="left:188.00px;top:163.85px;font-size:9.6px;font-weight:normal;font-style:normal;color:#404040;transform:scaleX(1.0180);-webkit-text-stroke:0.2px #404040;">inspect the model for gaps. There should be</span>
<span class="t" id="t7" style="left:188.00px;top:179.02px;font-size:9.6px;font-weight:normal;font-style:normal;color:#404040;transform:scaleX(1.0183);-webkit-text-stroke:0.2px #404040;">no gaps between the bodies enclosing the</span>
<span class="t" id="t8" style="left:188.00px;top:194.19px;font-size:9.6px;font-weight:normal;font-style:normal;color:#404040;transform:scaleX(1.0482);-webkit-text-stroke:0.2px #404040;">flow volume.</span>
<span class="t" id="t9" style="left:184.80px;top:229.87px;font-size:9.6px;font-weight:bold;font-style:normal;color:#2e2e2e;transform:scaleX(0.9551);">Seed face</span>
<span class="t" id="t10" style="left:357.90px;top:229.73px;font-size:9.3px;font-weight:normal;font-style:normal;color:#2a8dbf;transform:scaleX(0.9206);">Clear list</span>
<span class="t" id="t11" style="left:192.60px;top:255.59px;font-size:9.7px;font-weight:normal;font-style:normal;color:#4a4a4a;transform:scaleX(0.9906);">face 27@12</span>
<span class="t" id="t12" style="left:185.00px;top:284.37px;font-size:9.6px;font-weight:bold;font-style:normal;color:#2e2e2e;transform:scaleX(0.9734);">Boundary faces (optional)</span>
<span class="t" id="t13" style="left:357.90px;top:284.23px;font-size:9.3px;font-weight:normal;font-style:normal;color:#2a8dbf;transform:scaleX(0.9206);">Clear list</span>
<span class="t" id="t14" style="left:192.60px;top:309.59px;font-size:9.7px;font-weight:normal;font-style:normal;color:#4a4a4a;transform:scaleX(0.9906);">face 22@13</span>
<span class="t" id="t15" style="left:192.60px;top:328.49px;font-size:9.7px;font-weight:normal;font-style:normal;color:#4a4a4a;transform:scaleX(0.9906);">face 63@01</span>
<span class="t" id="t16" style="left:185.00px;top:357.47px;font-size:9.6px;font-weight:bold;font-style:normal;color:#2e2e2e;transform:scaleX(0.9736);">Excluded parts (optional)</span>
<span class="t" id="t17" style="left:357.90px;top:357.33px;font-size:9.3px;font-weight:normal;font-style:normal;color:#2a8dbf;transform:scaleX(0.9206);">Clear list</span>
<span class="t" id="t18" style="left:192.50px;top:382.89px;font-size:9.7px;font-weight:normal;font-style:italic;color:#7a7a7a;transform:scaleX(0.9361);">Pick Volumes</span>
<span class="t" id="t19" style="left:345.60px;top:422.36px;font-size:9.5px;font-weight:bold;font-style:normal;color:#fff;transform:scaleX(0.9663);">Apply</span>
<span class="t" id="t20" style="left:2.30px;top:49.05px;font-size:9.8px;font-weight:bold;font-style:normal;color:#2e2e2e;transform:scaleX(0.9834);">HISTORY</span>
<span class="t" id="t21" style="left:20.70px;top:74.20px;font-size:9.8px;font-weight:normal;font-style:normal;color:#484848;transform:scaleX(1.0270);">Create</span>
<span class="t" id="t22" style="left:20.70px;top:95.80px;font-size:9.8px;font-weight:normal;font-style:normal;color:#484848;transform:scaleX(1.0342);">Fix interferences</span>
<span class="t" id="t23" style="left:20.70px;top:117.90px;font-size:9.8px;font-weight:normal;font-style:normal;color:#484848;transform:scaleX(1.0348);">Union</span>
<span class="t" id="t24" style="left:20.70px;top:139.80px;font-size:9.8px;font-weight:normal;font-style:normal;color:#484848;transform:scaleX(1.0348);">Union</span>
<span class="t" id="t25" style="left:779.00px;top:92.09px;font-size:11.0px;font-weight:normal;font-style:normal;color:#2e2e2e;transform:scaleX(0.9887);-webkit-text-stroke:0.35px #2e2e2e;">Gaps</span>
<span class="t" id="t26" style="left:760.70px;top:127.53px;font-size:10.0px;font-weight:bold;font-style:normal;color:#2e2e2e;transform:scaleX(0.9614);">Your CAD Model has no gaps</span>
<span class="t" id="t27" style="left:760.30px;top:146.37px;font-size:9.6px;font-weight:normal;font-style:normal;color:#404040;transform:scaleX(1.0139);-webkit-text-stroke:0.2px #404040;">Your CAD model has no gaps smaller than the</span>
<span class="t" id="t28" style="left:760.30px;top:161.17px;font-size:9.6px;font-weight:normal;font-style:normal;color:#404040;transform:scaleX(1.0310);-webkit-text-stroke:0.2px #404040;">defined Maximum distance.</span>
<span class="t" id="t29" style="left:757.00px;top:196.69px;font-size:9.7px;font-weight:normal;font-style:normal;color:#4a4a4a;transform:scaleX(1.0289);">Maximum distance</span>
<span class="t" id="t30" style="left:862.50px;top:196.99px;font-size:9.7px;font-weight:normal;font-style:normal;color:#4a4a4a;transform:scaleX(1.0108);">1e-5</span>
<span class="t" id="t31" style="left:942.80px;top:196.79px;font-size:9.7px;font-weight:normal;font-style:normal;color:#4a4a4a;transform:scaleX(0.9656);">m</span>
<span class="t" id="t32" style="left:904.50px;top:234.94px;font-size:10.0px;font-weight:bold;font-style:normal;color:#fff;transform:scaleX(0.9244);">Detect gaps</span>
<span class="t" id="t33" style="left:1005.50px;top:49.60px;font-size:9.8px;font-weight:bold;font-style:normal;color:#2e2e2e;transform:scaleX(0.9300);--sx:0.93;">GEOMETRY</span>
<span class="t" id="t34" style="left:1005.80px;top:74.50px;font-size:9.8px;font-weight:bold;font-style:normal;color:#2e2e2e;transform:scaleX(0.9500);--sx:0.95;">Assembly</span>
<span class="t" id="t35" style="left:989.70px;top:193.49px;font-size:9.7px;font-weight:normal;font-style:normal;color:#4a4a4a;transform:scaleX(0.9500);--sx:0.95;">Show faces</span>
<span class="t" id="t36" style="left:19.00px;top:16.59px;font-size:7.1px;font-weight:normal;font-style:normal;color:#4a4a4a;transform:scaleX(0.9727);">Flow Volume</span>
<span class="t" id="t37" style="left:79.60px;top:16.59px;font-size:7.1px;font-weight:normal;font-style:normal;color:#4a4a4a;transform:scaleX(0.9988);">Cylinder</span>
<span class="t" id="t38" style="left:159.00px;top:16.59px;font-size:7.1px;font-weight:normal;font-style:normal;color:#4a4a4a;transform:scaleX(0.9749);">Delete</span>
<span class="t" id="t39" style="left:195.00px;top:16.59px;font-size:7.1px;font-weight:normal;font-style:normal;color:#4a4a4a;transform:scaleX(0.9851);">Move</span>
<span class="t" id="t40" style="left:271.75px;top:16.59px;font-size:7.1px;font-weight:normal;font-style:normal;color:#4a4a4a;transform:scaleX(0.9749);">Delete</span>
<span class="t" id="t41" style="left:304.10px;top:16.59px;font-size:7.1px;font-weight:normal;font-style:normal;color:#4a4a4a;transform:scaleX(0.9222);">Close Sheet</span>
<span class="t" id="t42" style="left:353.00px;top:16.59px;font-size:7.1px;font-weight:normal;font-style:normal;color:#4a4a4a;transform:scaleX(0.9502);">Boolean</span>
<span class="t" id="t43" style="left:399.90px;top:16.59px;font-size:7.1px;font-weight:normal;font-style:normal;color:#4a4a4a;transform:scaleX(0.9669);">Transform</span>
<span class="t" id="t44" style="left:451.25px;top:16.59px;font-size:7.1px;font-weight:normal;font-style:normal;color:#4a4a4a;transform:scaleX(0.9761);">Simplify</span>
<span class="t" id="t45" style="left:490.00px;top:16.59px;font-size:7.1px;font-weight:normal;font-style:normal;color:#4a4a4a;transform:scaleX(1.0043);">Wrap</span>
<span class="t" id="t46" style="left:571.00px;top:16.59px;font-size:7.1px;font-weight:normal;font-style:normal;color:#4a4a4a;transform:scaleX(0.9473);">Facet Split</span>
<span class="t" id="t47" style="left:614.60px;top:16.59px;font-size:7.1px;font-weight:normal;font-style:normal;color:#4a4a4a;transform:scaleX(1.0098);">Imprint</span>
<span class="t" id="t48" style="left:652.10px;top:16.59px;font-size:7.1px;font-weight:normal;font-style:normal;color:#4a4a4a;transform:scaleX(0.8676);">Scale</span>
<span class="t" id="t49" style="left:687.25px;top:16.59px;font-size:7.1px;font-weight:normal;font-style:normal;color:#4a4a4a;transform:scaleX(0.9955);">Split</span>
<span class="t" id="t50" style="left:717.00px;top:16.59px;font-size:7.1px;font-weight:normal;font-style:normal;color:#4a4a4a;transform:scaleX(0.9821);">Fix interferences</span>
<span class="t" id="t51" style="left:779.75px;top:16.59px;font-size:7.1px;font-weight:normal;font-style:normal;color:#4a4a4a;transform:scaleX(0.9517);">Add CAD</span>
<span class="t" id="t52" style="left:870.00px;top:16.59px;font-size:7.1px;font-weight:normal;font-style:normal;color:#4a4a4a;transform:scaleX(0.9076);">Gaps</span>
<span class="t" id="t53" style="left:900.40px;top:16.59px;font-size:7.1px;font-weight:normal;font-style:normal;color:#4a4a4a;transform:scaleX(1.0023);">Interferences</span>
<span class="t" id="t54" style="left:128.50px;top:5.28px;font-size:9.0px;font-weight:normal;font-style:normal;color:#777;transform:scaleX(0.7825);">FACE</span>
<span class="t" id="t55" style="left:238.25px;top:5.28px;font-size:9.0px;font-weight:normal;font-style:normal;color:#777;transform:scaleX(0.8093);">BODY</span>
<span class="t" id="t56" style="left:533.00px;top:5.28px;font-size:9.0px;font-weight:normal;font-style:normal;color:#777;transform:scaleX(0.8511);">MODEL</span>
<span class="t" id="t57" style="left:831.60px;top:5.28px;font-size:9.0px;font-weight:normal;font-style:normal;color:#777;transform:scaleX(0.7905);">TOOLS</span>
<span class="t" id="t58" style="left:0.30px;top:5.28px;font-size:9.0px;font-weight:normal;font-style:normal;color:#777;transform:scaleX(0.6773);">TE</span>
<!-- /TEXTS -->

<!-- /UI -->
</body></html>
